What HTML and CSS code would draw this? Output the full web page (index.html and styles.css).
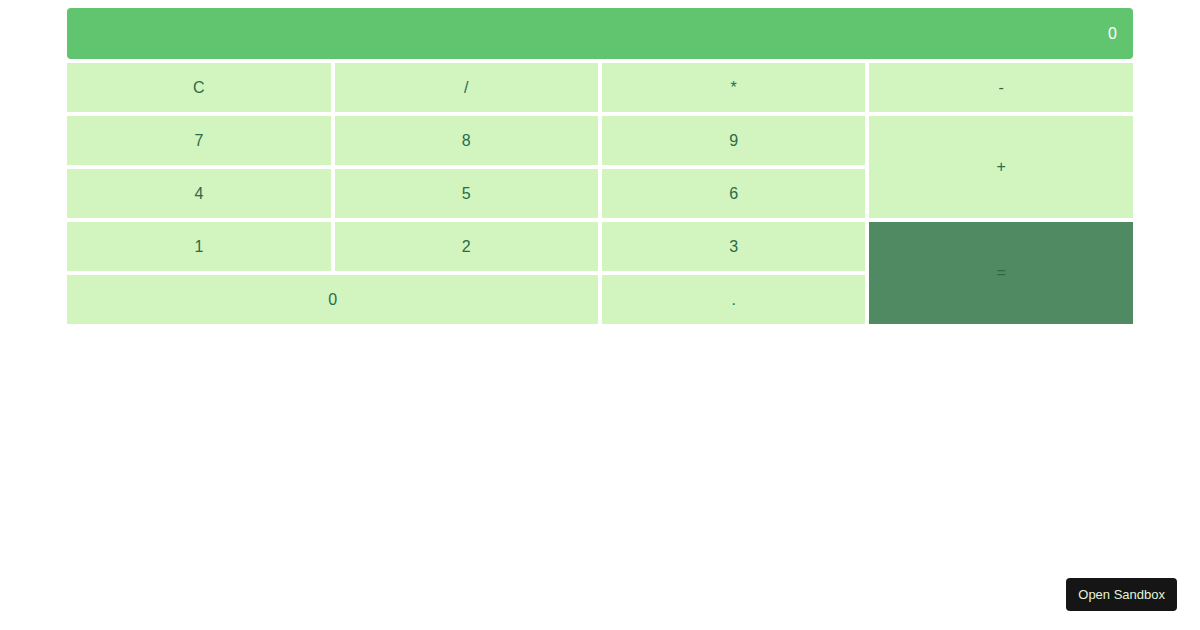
FILE: index.html
```html
<!DOCTYPE html>
<html lang="en">
  <head>
    <meta charset="UTF-8" />
    <meta name="viewport" content="width=device-width, initial-scale=1.0" />
    <title>Calculator</title>
    <link rel="stylesheet" href="styles.css">
  </head>
  <body>
    <div class="calculator">
      <div class="display">0</div>
      <div class="keys">
        <button class="key">C</button>
        <button class="key">/</button>
        <button class="key">*</button>
        <button class="key">-</button>
        <button class="key">7</button>
        <button class="key">8</button>
        <button class="key">9</button>
        <button class="key plus">+</button>
        <button class="key">4</button>
        <button class="key">5</button>
        <button class="key">6</button>
        <button class="key">1</button>
        <button class="key">2</button>
        <button class="key">3</button>
        <button class="key equals">=</button>
        <button class="key zero">0</button>
        <button class="key">.</button>
      </div>
    </div>

    <a class="sandbox-btn" href="#">Open Sandbox</a>
  </body>
</html>
```

FILE: styles.css
```css
body {
  font-family: "Liberation Sans", Arial, sans-serif;
  margin: 8px;
  background-color: #ffffff;
}

.calculator {
  width: 90%;
  margin: 0 auto;
}

.display {
  height: 51px;
  line-height: 51px;
  background-color: #61c46f;
  color: #ffffff;
  text-align: right;
  padding: 0 16px;
  font-size: 16px;
  border-radius: 4px;
}

.keys {
  display: grid;
  grid-template-columns: repeat(4, 1fr);
  grid-auto-rows: 49px;
  gap: 4px;
  margin-top: 4px;
}

.key {
  border: none;
  background-color: #d2f4bf;
  color: #2b6b4a;
  font-family: inherit;
  font-size: 16px;
  padding: 0;
  cursor: pointer;
}

.key.plus {
  grid-column: 4;
  grid-row: 2 / span 2;
}

.key.equals {
  grid-column: 4;
  grid-row: 4 / span 2;
  background-color: #508a63;
  color: #2b6b4a;
}

.key.zero {
  grid-column: 1 / span 2;
}

.sandbox-btn {
  position: fixed;
  right: 23px;
  bottom: 19px;
  background-color: #151515;
  color: #e4f4d8;
  font-size: 13px;
  text-decoration: none;
  padding: 9px 12px;
  border-radius: 4px;
}
```
